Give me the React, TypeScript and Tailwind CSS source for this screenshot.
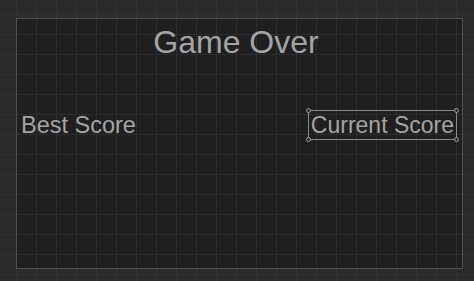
import React from 'react';

// small round handle drawn at the corners of the selected text rect
function Handle({ className }: { className: string }) {
  return (
    <span
      className={`absolute w-[5px] h-[5px] rounded-full border border-[#9a9a9a] bg-[#2a2a2a] ${className}`}
    />
  );
}

export default function App() {
  return (
    <div
      className="w-[474px] h-[281px] overflow-hidden pl-[16px] pt-[18px] bg-[#2b2b2b] bg-[linear-gradient(to_right,#323232_1px,transparent_1px),linear-gradient(to_bottom,#323232_1px,transparent_1px)] bg-[size:20px_20px] bg-[position:-4px_-6px]"
      style={{ fontFamily: '"Liberation Sans", Arial, sans-serif' }}
    >
      <div className="relative w-[447px] h-[251px] border border-[#505050] bg-[#1f1f1f] bg-[linear-gradient(to_right,#2d2d2d_1px,transparent_1px),linear-gradient(to_bottom,#2d2d2d_1px,transparent_1px)] bg-[size:20px_20px] bg-[position:19px_15px]">
        <div className="flex flex-col">
          <h1 className="pt-[7px] pr-[7px] text-center text-[32px] leading-[32px] text-[#a4a4a4]">
            Game Over
          </h1>

          <div className="mt-[52px] flex items-center justify-between pl-[4px] pr-[5px]">
            <span className="text-[23.5px] leading-[24px] text-[#a4a4a4]">Best Score</span>

            <span className="relative px-[2px] py-[2px] border border-[#8a8a8a] text-[23px] leading-[24px] text-[#a4a4a4]">
              Current Score
              <Handle className="-top-[3px] -left-[3px]" />
              <Handle className="-top-[3px] -right-[3px]" />
              <Handle className="-bottom-[3px] -left-[3px]" />
              <Handle className="-bottom-[3px] -right-[3px]" />
            </span>
          </div>
        </div>
      </div>
    </div>
  );
}
